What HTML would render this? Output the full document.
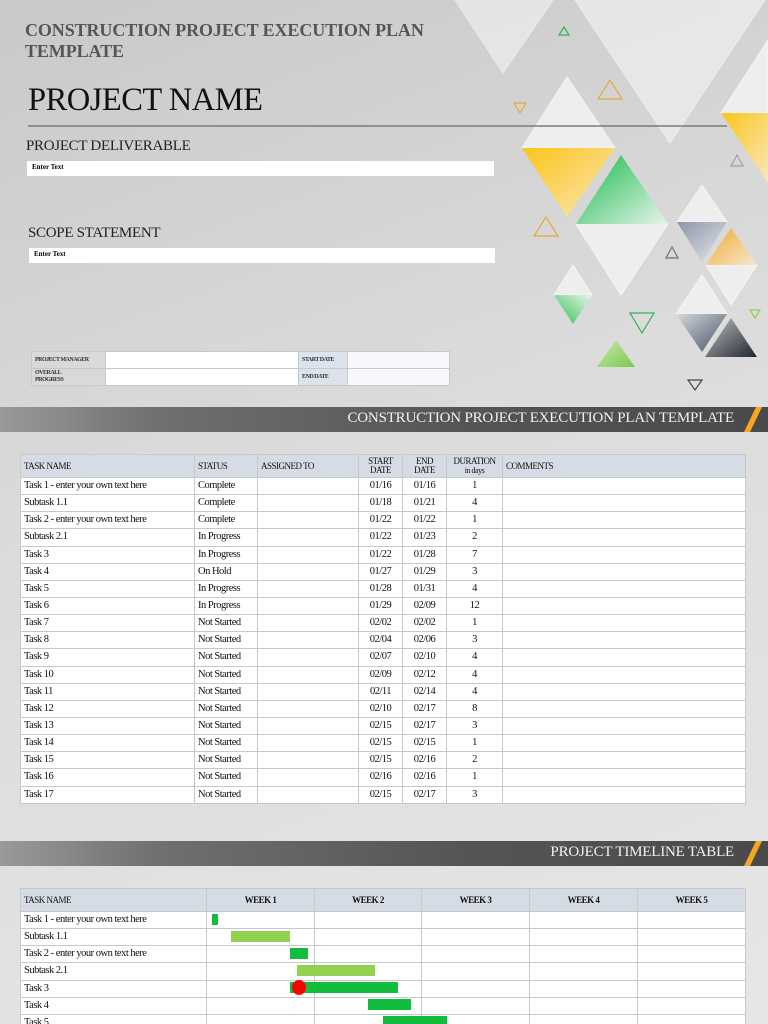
<!DOCTYPE html>
<html><head><meta charset="utf-8">
<style>
*{margin:0;padding:0;box-sizing:border-box}
html,body{width:768px;height:1024px;overflow:hidden}
body{position:relative;font-family:"Liberation Serif",serif;background:linear-gradient(160deg,#c9c9c9 0%,#dcdcdc 45%,#e6e6e6 100%)}
.abs{position:absolute}
table{border-collapse:collapse;table-layout:fixed;position:absolute}
td{border:1px solid #c8c8c8;background:#fff;font-size:10.5px;letter-spacing:-0.5px;padding:0 3px;white-space:nowrap;overflow:hidden;color:#111;line-height:10px}
tr.h td{background:#d6dce6;font-size:9px}
.c{text-align:center}
.bar{position:absolute;height:11px;top:3px}
.dg{background:#12bd3d}.lg{background:#92d050}
</style></head><body>
<svg class="abs" style="left:0;top:0" width="768" height="440">
<defs>
<linearGradient id="y" x1="0" y1="0" x2="1" y2="1"><stop offset="0" stop-color="#fcc419"/><stop offset="1" stop-color="#f8e8b8"/></linearGradient>
<linearGradient id="g" x1="0" y1="0" x2="1" y2="1"><stop offset="0" stop-color="#17b94a"/><stop offset="1" stop-color="#e6f5ea"/></linearGradient>
<linearGradient id="g2" x1="1" y1="0" x2="0" y2="1"><stop offset="0" stop-color="#e8f5ea"/><stop offset="1" stop-color="#2ebd4e"/></linearGradient>
<linearGradient id="lg" x1="0" y1="0" x2="1" y2="1"><stop offset="0" stop-color="#c8e8b4"/><stop offset="1" stop-color="#7cc94a"/></linearGradient>
<linearGradient id="b" x1="0" y1="0" x2="1" y2="1"><stop offset="0" stop-color="#8d97a8"/><stop offset="1" stop-color="#e4e7ec"/></linearGradient>
<linearGradient id="o" x1="0" y1="0" x2="1" y2="1"><stop offset="0" stop-color="#f3a932"/><stop offset="1" stop-color="#f6e6cc"/></linearGradient>
<linearGradient id="d" x1="0" y1="0" x2="1" y2="1"><stop offset="0" stop-color="#d4d8de"/><stop offset="1" stop-color="#4a5262"/></linearGradient>
<linearGradient id="k" x1="0" y1="0" x2="1" y2="1"><stop offset="0" stop-color="#c0c0c0"/><stop offset="1" stop-color="#202630"/></linearGradient>
</defs>
<g fill="#eeeeee" stroke="#f6f6f6" stroke-width="1">
<polygon points="455,0 553,0 503,73" opacity=".7"/>
<polygon points="575,0 765,0 670,143" opacity=".75"/>
<polygon points="768,40 721,113 768,113"/>
<polygon points="567,77 522,148 615,148"/>
<polygon points="576,224 668,224 621,295"/>
<polygon points="702,185 677,222 727,222"/>
<polygon points="706,265 757,265 731,305"/>
<polygon points="573,265 554,295 592,295"/>
<polygon points="702,275 676,314 727,314"/>
</g>
<polygon points="522,148 615,148 567,217" fill="url(#y)"/>
<polygon points="721,113 768,113 768,183" fill="url(#y)"/>
<polygon points="621,155 576,224 668,224" fill="url(#g)"/>
<polygon points="677,222 727,222 702,262" fill="url(#b)"/>
<polygon points="731,228 706,265 757,265" fill="url(#o)"/>
<polygon points="554,295 592,295 573,324" fill="url(#g2)"/>
<polygon points="676,314 727,314 702,352" fill="url(#d)"/>
<polygon points="731,318 705,357 757,357" fill="url(#k)"/>
<polygon points="616,340 597,367 635,367" fill="url(#lg)"/>
<g fill="none" stroke-width="1.2">
<polygon points="564,27 559,35 569,35" stroke="#2db35a"/>
<polygon points="610,80 598,99 622,99" stroke="#e5a93a"/>
<polygon points="514,103 526,103 520,113" stroke="#e5a93a"/>
<polygon points="546,217 534,236 558,236" stroke="#e5a93a"/>
<polygon points="737,155 731,166 743,166" stroke="#9aa2b0"/>
<polygon points="672,247 666,258 678,258" stroke="#6a7282"/>
<polygon points="630,313 654,313 642,333" stroke="#2db35a"/>
<polygon points="750,310 760,310 755,318" stroke="#8fcf5a"/>
<polygon points="688,380 702,380 695,390" stroke="#444"/>
</g>
<line x1="28" y1="126" x2="727" y2="126" stroke="#7a7a7a" stroke-width="1.5"/>
</svg>

<div class="abs" style="left:25px;top:20px;font-size:18px;line-height:21px;color:#555;font-weight:bold;letter-spacing:-0.1px">CONSTRUCTION PROJECT EXECUTION PLAN<br>TEMPLATE</div>
<div class="abs" style="left:28px;top:82px;font-size:32.5px;color:#111;letter-spacing:-0.5px">PROJECT NAME</div>
<div class="abs" style="left:26px;top:138px;font-size:15px;color:#222;letter-spacing:-0.3px">PROJECT DELIVERABLE</div>
<div class="abs" style="left:27px;top:161px;width:467px;height:15px;background:#fff;font-size:7px;padding:2px 5px;font-weight:bold">Enter Text</div>
<div class="abs" style="left:28px;top:225px;font-size:15px;color:#222;letter-spacing:-0.3px">SCOPE STATEMENT</div>
<div class="abs" style="left:29px;top:248px;width:466px;height:15px;background:#fff;font-size:7px;padding:2px 5px;font-weight:bold">Enter Text</div>

<table style="left:31px;top:351px;width:418px;height:34px">
<colgroup><col style="width:74px"><col style="width:193px"><col style="width:49px"><col style="width:102px"></colgroup>
<tr style="height:17px"><td style="background:#d9d9d9;font-size:6px;font-weight:bold;color:#333">PROJECT MANAGER</td><td></td><td style="background:#dde3ec;font-size:6px;font-weight:bold;color:#333">START DATE</td><td style="background:#f5f7fa"></td></tr>
<tr style="height:17px"><td style="background:#d9d9d9;font-size:6px;font-weight:bold;color:#333;line-height:7px">OVERALL<br>PROGRESS</td><td></td><td style="background:#dde3ec;font-size:6px;font-weight:bold;color:#333">END DATE</td><td style="background:#f5f7fa"></td></tr>
</table>

<div class="abs" style="left:0;top:407px;width:768px;height:25px;background:linear-gradient(90deg,#9a9a9a 0%,#707070 20%,#555 60%,#4a4a4a 100%)"></div>
<div class="abs" style="right:34px;top:410px;font-size:15px;color:#f2f2f2;letter-spacing:-0.2px">CONSTRUCTION PROJECT EXECUTION PLAN TEMPLATE</div>
<svg class="abs" style="left:740px;top:407px" width="28" height="25"><polygon points="4,25 10,25 22,0 16,0" fill="#f5a623"/></svg>

<table style="left:20px;top:454px;width:725px">
<colgroup><col style="width:174px"><col style="width:63px"><col style="width:101px"><col style="width:44px"><col style="width:44px"><col style="width:56px"><col style="width:243px"></colgroup>
<tr class="h" style="height:23px"><td>TASK NAME</td><td>STATUS</td><td>ASSIGNED TO</td><td class="c" style="line-height:9px">START<br>DATE</td><td class="c" style="line-height:9px">END<br>DATE</td><td class="c" style="line-height:9px">DURATION<br><span style="font-size:8px">in days</span></td><td>COMMENTS</td></tr>
<tr style="height:17.15px"><td>Task 1 - enter your own text here</td><td>Complete</td><td></td><td class="c">01/16</td><td class="c">01/16</td><td class="c">1</td><td></td></tr>
<tr style="height:17.15px"><td>Subtask 1.1</td><td>Complete</td><td></td><td class="c">01/18</td><td class="c">01/21</td><td class="c">4</td><td></td></tr>
<tr style="height:17.15px"><td>Task 2 - enter your own text here</td><td>Complete</td><td></td><td class="c">01/22</td><td class="c">01/22</td><td class="c">1</td><td></td></tr>
<tr style="height:17.15px"><td>Subtask 2.1</td><td>In Progress</td><td></td><td class="c">01/22</td><td class="c">01/23</td><td class="c">2</td><td></td></tr>
<tr style="height:17.15px"><td>Task 3</td><td>In Progress</td><td></td><td class="c">01/22</td><td class="c">01/28</td><td class="c">7</td><td></td></tr>
<tr style="height:17.15px"><td>Task 4</td><td>On Hold</td><td></td><td class="c">01/27</td><td class="c">01/29</td><td class="c">3</td><td></td></tr>
<tr style="height:17.15px"><td>Task 5</td><td>In Progress</td><td></td><td class="c">01/28</td><td class="c">01/31</td><td class="c">4</td><td></td></tr>
<tr style="height:17.15px"><td>Task 6</td><td>In Progress</td><td></td><td class="c">01/29</td><td class="c">02/09</td><td class="c">12</td><td></td></tr>
<tr style="height:17.15px"><td>Task 7</td><td>Not Started</td><td></td><td class="c">02/02</td><td class="c">02/02</td><td class="c">1</td><td></td></tr>
<tr style="height:17.15px"><td>Task 8</td><td>Not Started</td><td></td><td class="c">02/04</td><td class="c">02/06</td><td class="c">3</td><td></td></tr>
<tr style="height:17.15px"><td>Task 9</td><td>Not Started</td><td></td><td class="c">02/07</td><td class="c">02/10</td><td class="c">4</td><td></td></tr>
<tr style="height:17.15px"><td>Task 10</td><td>Not Started</td><td></td><td class="c">02/09</td><td class="c">02/12</td><td class="c">4</td><td></td></tr>
<tr style="height:17.15px"><td>Task 11</td><td>Not Started</td><td></td><td class="c">02/11</td><td class="c">02/14</td><td class="c">4</td><td></td></tr>
<tr style="height:17.15px"><td>Task 12</td><td>Not Started</td><td></td><td class="c">02/10</td><td class="c">02/17</td><td class="c">8</td><td></td></tr>
<tr style="height:17.15px"><td>Task 13</td><td>Not Started</td><td></td><td class="c">02/15</td><td class="c">02/17</td><td class="c">3</td><td></td></tr>
<tr style="height:17.15px"><td>Task 14</td><td>Not Started</td><td></td><td class="c">02/15</td><td class="c">02/15</td><td class="c">1</td><td></td></tr>
<tr style="height:17.15px"><td>Task 15</td><td>Not Started</td><td></td><td class="c">02/15</td><td class="c">02/16</td><td class="c">2</td><td></td></tr>
<tr style="height:17.15px"><td>Task 16</td><td>Not Started</td><td></td><td class="c">02/16</td><td class="c">02/16</td><td class="c">1</td><td></td></tr>
<tr style="height:17.15px"><td>Task 17</td><td>Not Started</td><td></td><td class="c">02/15</td><td class="c">02/17</td><td class="c">3</td><td></td></tr>
</table>

<div class="abs" style="left:0;top:841px;width:768px;height:25px;background:linear-gradient(90deg,#9a9a9a 0%,#707070 20%,#555 60%,#4a4a4a 100%)"></div>
<div class="abs" style="right:34px;top:844px;font-size:15px;color:#f2f2f2;letter-spacing:-0.2px">PROJECT TIMELINE TABLE</div>
<svg class="abs" style="left:740px;top:841px" width="28" height="25"><polygon points="4,25 10,25 22,0 16,0" fill="#f5a623"/></svg>

<table style="left:20px;top:888px;width:725px">
<colgroup><col style="width:186px"><col style="width:108px"><col style="width:107px"><col style="width:108px"><col style="width:108px"><col style="width:108px"></colgroup>
<tr class="h" style="height:23px"><td>TASK NAME</td><td class="c" style="font-weight:bold">WEEK 1</td><td class="c" style="font-weight:bold">WEEK 2</td><td class="c" style="font-weight:bold">WEEK 3</td><td class="c" style="font-weight:bold">WEEK 4</td><td class="c" style="font-weight:bold">WEEK 5</td></tr>
<tr style="height:17.15px"><td>Task 1 - enter your own text here</td><td></td><td></td><td></td><td></td><td></td></tr>
<tr style="height:17.15px"><td>Subtask 1.1</td><td></td><td></td><td></td><td></td><td></td></tr>
<tr style="height:17.15px"><td>Task 2 - enter your own text here</td><td></td><td></td><td></td><td></td><td></td></tr>
<tr style="height:17.15px"><td>Subtask 2.1</td><td></td><td></td><td></td><td></td><td></td></tr>
<tr style="height:17.15px"><td>Task 3</td><td></td><td></td><td></td><td></td><td></td></tr>
<tr style="height:17.15px"><td>Task 4</td><td></td><td></td><td></td><td></td><td></td></tr>
<tr style="height:17.15px"><td>Task 5</td><td></td><td></td><td></td><td></td><td></td></tr>
</table>
<div class="abs" style="left:0;top:911px;width:768px;height:113px;overflow:hidden">
<div class="bar dg" style="left:212px;top:3px;width:6px"></div>
<div class="bar lg" style="left:231px;top:20px;width:59px"></div>
<div class="bar dg" style="left:290px;top:37px;width:18px"></div>
<div class="bar lg" style="left:297px;top:54px;width:78px"></div>
<div class="bar dg" style="left:290px;top:71px;width:108px"></div>
<div class="abs" style="left:292px;top:69px;width:14px;height:15px;border-radius:50%;background:#f00"></div>
<div class="bar dg" style="left:368px;top:88px;width:43px"></div>
<div class="bar dg" style="left:383px;top:105px;width:64px"></div>
</div>
</body></html>
